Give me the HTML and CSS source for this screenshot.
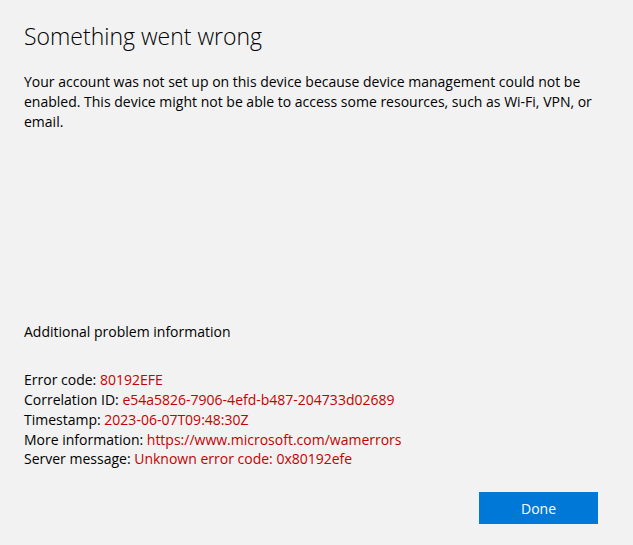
FILE: index.html
```html
<!DOCTYPE html>
<html lang="en">
<head>
  <meta charset="UTF-8" />
  <title>Something went wrong</title>
  <link rel="stylesheet" href="styles.css">
</head>
<body>
  <div class="dialog">
    <div class="content">
      <h1 class="title">Something went wrong</h1>
      <p class="message">
        Your account was not set up on this device because device management could not be<br>
        enabled. This device might not be able to access some resources, such as Wi-Fi, VPN, or<br>
        email.
      </p>
    </div>

    <!-- details -->
    <div class="details">
      <div class="details-header">Additional problem information</div>
      <div class="detail-list">
        <div>Error code: <span class="val">80192EFE</span></div>
        <div>Correlation ID: <span class="val">e54a5826-7906-4efd-b487-204733d02689</span></div>
        <div>Timestamp: <span class="val">2023-06-07T09:48:30Z</span></div>
        <div>More information: <span class="val">https://www.microsoft.com/wamerrors</span></div>
        <div>Server message: <span class="val">Unknown error code: 0x80192efe</span></div>
      </div>
    </div>

    <div class="footer">
      <button class="done-btn">Done</button>
    </div>
  </div>
</body>
</html>
```

FILE: styles.css
```css
html, body { margin: 0; height: 100%; }
body {
  background: #f2f2f2;
  color: #000;
  font-family: "Open Sans", "Noto Sans", sans-serif;
  font-size: 14px;
}
.dialog {
  height: 100%;
  box-sizing: border-box;
  padding: 20px 35px 21px 24px;
  display: flex;
  flex-direction: column;
}
.content { flex-grow: 1; }
.title {
  margin: 0;
  font-weight: 300;
  font-size: 23px;
  line-height: 32px;
}
.message {
  margin: 20px 0 0;
  line-height: 20px;
  white-space: nowrap;
}
.details-header { line-height: 20px; margin-bottom: 28px; }
.detail-list div { line-height: 19.7px; }
.val { color: #c50000; }
.footer {
  display: flex;
  justify-content: flex-end;
  margin-top: 23px;
}
.done-btn {
  width: 119px;
  height: 32px;
  background: #0078d7;
  border: none;
  color: #fff;
  font-family: inherit;
  font-size: 14px;
  cursor: pointer;
}
```
